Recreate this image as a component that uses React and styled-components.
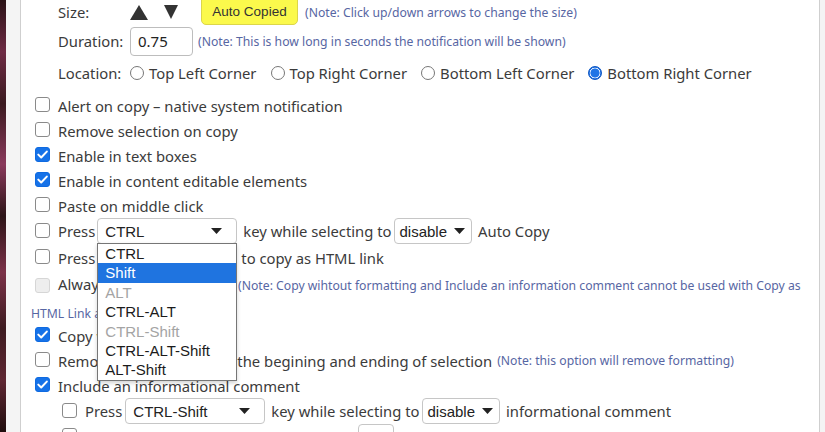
import React from "react";
import styled, { createGlobalStyle } from "styled-components";

const GlobalStyle = createGlobalStyle`
  html, body { margin: 0; padding: 0; }
  body {
    width: 825px;
    height: 432px;
    overflow: hidden;
    background: #f3f3f3;
    font-family: "Noto Sans", "Open Sans", sans-serif;
    color: #3b3b3b;
  }
`;

const Screen = styled.div`
  display: flex;
  height: 432px;
  overflow: hidden;
`;

const Wallpaper = styled.div`
  flex: none;
  width: 6px;
  background: linear-gradient(
    180deg,
    #2a1216 0%,
    #6e2b44 12%,
    #3a1a1f 24%,
    #8a3a5c 38%,
    #2c1417 50%,
    #7c3249 63%,
    #3d1b20 76%,
    #5f2733 88%,
    #1f0d0d 100%
  );
`;

const Gutter = styled.div`
  flex: none;
  width: ${(p) => p.$w}px;
  background: #f4f4f4;
`;

const Panel = styled.div`
  flex: none;
  position: relative;
  box-sizing: border-box;
  width: 800px;
  background: #fff;
  border-left: 1px solid #cfcfcf;
  border-right: 1px solid #cfcfcf;
  padding: 0 6px 0 10px;
  font-size: 14.8px;
`;

const SubRow = styled.div`
  display: flex;
  align-items: center;
  height: ${(p) => p.$h}px;
  padding-left: 27px;
  white-space: nowrap;
`;

const SubLabel = styled.span`
  flex: none;
  width: 72px;
`;

const Arrow = styled.svg`
  flex: none;
  display: block;
  margin-right: ${(p) => p.$gap}px;
`;

const SampleButton = styled.div`
  flex: none;
  align-self: flex-end;
  display: flex;
  align-items: flex-end;
  justify-content: center;
  box-sizing: border-box;
  width: 97px;
  height: 31px;
  padding-bottom: 5px;
  margin-bottom: -1px;
  margin-right: 7px;
  background: #fbf94c;
  border: 1px solid #dcd64a;
  border-radius: 5px;
  font-family: "Liberation Sans", Arial, sans-serif;
  font-size: 13.5px;
  color: #333;
`;

const Note = styled.span`
  font-size: 12.2px;
  color: #5766a3;
  margin-left: ${(p) => p.$gap ?? 5}px;
`;

const NumberField = styled.div`
  flex: none;
  box-sizing: border-box;
  width: 63px;
  height: 29px;
  display: flex;
  align-items: center;
  padding-left: 7px;
  border: 1px solid #bdbdbd;
  border-radius: 4px;
  font-size: 15px;
  color: #222;
  margin-right: 5px;
`;

const SmallField = styled.div`
  flex: none;
  align-self: flex-start;
  box-sizing: border-box;
  width: 36px;
  height: 28px;
  margin-left: ${(p) => p.$offset}px;
  border: 1px solid #c6c6c6;
  border-radius: 4px;
  background: #fff;
`;

const RadioItem = styled.span`
  display: inline-flex;
  align-items: center;
  margin-right: 14px;
`;

const RadioDot = styled.span`
  flex: none;
  box-sizing: border-box;
  width: 14px;
  height: 14px;
  border-radius: 50%;
  margin-right: 5px;
  border: 1px solid ${(p) => (p.$on ? "#0c56c4" : "#777")};
  background: ${(p) =>
    p.$on
      ? "radial-gradient(circle, #1f74e6 0 4.2px, #dce8fb 4.8px 5.2px, #1f6fe0 5.6px)"
      : "#fff"};
`;

const Row = styled.div`
  display: flex;
  align-items: center;
  height: ${(p) => p.$h || 25}px;
  margin-top: ${(p) => p.$space || 0}px;
  padding-left: ${(p) => p.$indent || 0}px;
  white-space: nowrap;
`;

/* a row whose trailing note wraps back under the checkbox */
const WrapRow = styled.div`
  height: 52px;
  line-height: 26px;
`;

const Box = styled.span`
  flex: none;
  display: inline-flex;
  align-items: center;
  justify-content: center;
  vertical-align: middle;
  box-sizing: border-box;
  width: 15px;
  height: 15px;
  margin: -2px 8px 0 4px;
  border-radius: 3px;
  border: 1px solid
    ${(p) => (p.$checked ? "#0f6ae0" : p.$disabled ? "#d6d6d6" : "#8a8a8a")};
  background: ${(p) =>
    p.$checked ? "#1672e8" : p.$disabled ? "#eeeeee" : "#fff"};
`;

const SelectWrap = styled.span`
  position: relative;
  flex: none;
  display: inline-flex;
  margin: 0 ${(p) => p.$after ?? 6}px 0 ${(p) => p.$before ?? 6}px;
`;

const Select = styled.span`
  display: inline-flex;
  align-items: center;
  justify-content: space-between;
  box-sizing: border-box;
  width: ${(p) => (p.$w ? `${p.$w}px` : "auto")};
  height: 26px;
  padding: 0 ${(p) => (p.$w ? 14 : 6)}px 0 ${(p) => (p.$w ? 7 : 5)}px;
  gap: 7px;
  border: 1px solid #c6c6c6;
  border-radius: 4px;
  background: #fff;
  font-family: "Liberation Sans", Arial, sans-serif;
  font-size: 15px;
  color: #222;
`;

const Menu = styled.div`
  position: absolute;
  top: calc(100% - 1px);
  left: 0;
  z-index: 10;
  box-sizing: border-box;
  width: 140px;
  background: #fff;
  border: 1px solid #767676;
  box-shadow: 0 2px 4px rgba(0, 0, 0, 0.18);
  font-family: "Liberation Sans", Arial, sans-serif;
  font-size: 15px;
`;

const MenuItem = styled.div`
  height: 19.4px;
  line-height: 19.4px;
  padding-left: 7px;
  color: ${(p) => (p.$active ? "#fff" : p.$disabled ? "#a4a4a4" : "#1b1b1b")};
  background: ${(p) => (p.$active ? "#1f74e0" : "transparent")};
`;

const Text = styled.span``;

const Caret = () => (
  <svg width="11" height="6" viewBox="0 0 11 6">
    <path d="M0 0h11L5.5 6z" fill="#222" />
  </svg>
);

const Tick = () => (
  <svg width="11" height="9" viewBox="0 0 11 9">
    <path
      d="M1.3 4.6l2.9 2.9L9.8 1.6"
      fill="none"
      stroke="#fff"
      strokeWidth="2"
      strokeLinecap="round"
      strokeLinejoin="round"
    />
  </svg>
);

const Check = ({ checked, disabled }) => (
  <Box $checked={checked} $disabled={disabled}>
    {checked && <Tick />}
  </Box>
);

const Dropdown = ({ value, width, menu, items, before, after }) => (
  <SelectWrap $before={before} $after={after}>
    <Select $w={width}>
      <span>{value}</span>
      <Caret />
    </Select>
    {menu && (
      <Menu>
        {items.map((it) => (
          <MenuItem key={it.label} $active={it.active} $disabled={it.disabled}>
            {it.label}
          </MenuItem>
        ))}
      </Menu>
    )}
  </SelectWrap>
);

const keyOptions = [
  { label: "CTRL" },
  { label: "Shift", active: true },
  { label: "ALT", disabled: true },
  { label: "CTRL-ALT" },
  { label: "CTRL-Shift", disabled: true },
  { label: "CTRL-ALT-Shift" },
  { label: "ALT-Shift" },
];

const locations = [
  "Top Left Corner",
  "Top Right Corner",
  "Bottom Left Corner",
  "Bottom Right Corner",
];

export default function App() {
  return (
    <>
      <GlobalStyle />
      <Screen>
        <Wallpaper />
        <Gutter $w={14} />
        <Panel>
          <SubRow $h={24}>
            <SubLabel>Size:</SubLabel>
            <Arrow $gap={16} width="18" height="15" viewBox="0 0 18 15">
              <path d="M9 0L18 15H0z" fill="#333" />
            </Arrow>
            <Arrow $gap={23} width="14" height="14" viewBox="0 0 14 14">
              <path d="M0 0h14L7 14z" fill="#333" />
            </Arrow>
            <SampleButton>Auto Copied</SampleButton>
            <Note $gap={0}>(Note: Click up/down arrows to change the size)</Note>
          </SubRow>
          <SubRow $h={34}>
            <SubLabel>Duration:</SubLabel>
            <NumberField>0.75</NumberField>
            <Note $gap={0}>
              (Note: This is how long in seconds the notification will be shown)
            </Note>
          </SubRow>
          <SubRow $h={30}>
            <SubLabel>Location:</SubLabel>
            {locations.map((loc, i) => (
              <RadioItem key={loc}>
                <RadioDot $on={i === 3} />
                {loc}
              </RadioItem>
            ))}
          </SubRow>

          <Row $space={5}>
            <Check />
            <Text>Alert on copy – native system notification</Text>
          </Row>
          <Row>
            <Check />
            <Text>Remove selection on copy</Text>
          </Row>
          <Row>
            <Check checked />
            <Text>Enable in text boxes</Text>
          </Row>
          <Row>
            <Check checked />
            <Text>Enable in content editable elements</Text>
          </Row>
          <Row>
            <Check />
            <Text>Paste on middle click</Text>
          </Row>
          <Row $h={26}>
            <Check />
            <Text>Press</Text>
            <Dropdown value="CTRL" width={140} menu items={keyOptions} before={2} />
            <Text>key while selecting to</Text>
            <Dropdown value="disable" before={2} />
            <Text>Auto Copy</Text>
          </Row>
          <Row $h={27}>
            <Check />
            <Text>Press</Text>
            <Dropdown value="Shift" width={140} before={2} after={4} />
            <Text>to copy as HTML link</Text>
          </Row>
          <WrapRow>
            <Check disabled />
            <Text>Always copy as HTML link</Text>
            <Note $gap={4}>
              (Note: Copy wihtout formatting and Include an information comment
              cannot be used with Copy as HTML Link always)
            </Note>
          </WrapRow>
          <Row>
            <Check checked />
            <Text>Copy without formatting</Text>
          </Row>
          <Row>
            <Check />
            <Text>Remove whitespace from the begining and ending of selection</Text>
            <Note>(Note: this option will remove formatting)</Note>
          </Row>
          <Row>
            <Check checked />
            <Text>Include an informational comment</Text>
          </Row>
          <Row $h={26} $indent={27}>
            <Check />
            <Text>Press</Text>
            <Dropdown value="CTRL-Shift" width={140} before={3} />
            <Text>key while selecting to</Text>
            <Dropdown value="disable" before={2} />
            <Text>informational comment</Text>
          </Row>
          <Row $indent={27}>
            <Check />
            <SmallField $offset={273} />
          </Row>
        </Panel>
        <Gutter $w={5} />
      </Screen>
    </>
  );
}
